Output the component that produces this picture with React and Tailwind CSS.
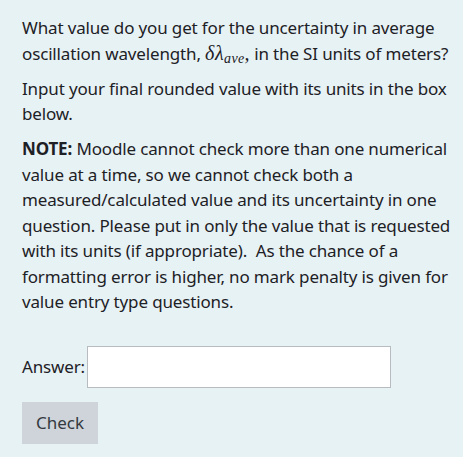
export default function App() {
  return (
    <div className="w-[474px] h-[460px] bg-white">
      <div
        className="w-[463px] h-[457px] bg-[#e7f2f5] pl-[22px] pr-[4px] pt-[15px] text-[#1d2125] text-[17px] leading-[25.5px] tracking-[-0.15px]"
        style={{ fontFamily: '"Noto Sans", "Open Sans", sans-serif' }}
      >
        <p className="mb-[9.5px]">
          What value do you get for the uncertainty in average oscillation wavelength,{" "}
          <span
            style={{ fontFamily: '"Liberation Serif", "DejaVu Serif", serif' }}
            className="italic text-[20px] leading-none tracking-[0.5px]"
          >
            δλ
            <span className="relative top-[3px] text-[14px] leading-none tracking-[0.3px]">ave</span>,
          </span>{" "}
          in the SI units of meters?
        </p>
        <p className="mb-[9.5px]">Input your final rounded value with its units in the box below.</p>
        <p>
          <b className="font-bold">NOTE:</b> Moodle cannot check more than one numerical value at a time, so we cannot check both a measured/calculated value and its uncertainty in one question. Please put in only the value that is requested with its units (if appropriate).&nbsp; As the chance of a formatting error is higher, no mark penalty is given for value entry type questions.
        </p>
        <div className="flex items-center mt-[31px]">
          <span className="mr-[2px]">Answer:</span>
          <div className="w-[304px] h-[42px] bg-white border border-[#b8bcc0]" />
        </div>
        <button className="mt-[14px] w-[76px] h-[42px] bg-[#ced4da] text-[#343a40] text-[17px] tracking-normal">
          Check
        </button>
      </div>
    </div>
  );
}
